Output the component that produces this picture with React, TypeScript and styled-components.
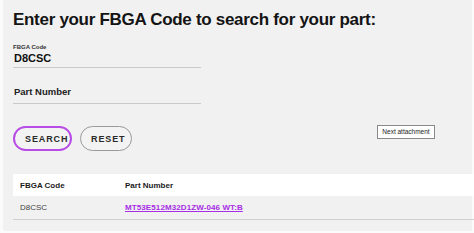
import React from 'react';
import styled, { createGlobalStyle } from 'styled-components';

const GlobalStyle = createGlobalStyle`
  * { box-sizing: border-box; }
  body {
    margin: 0;
    background: #fbfbfb;
    font-family: 'Liberation Sans', Arial, sans-serif;
    color: #1a1a1a;
  }
`;

const Panel = styled.main`
  position: relative;
  margin: 0 2px 0 3px;
  height: 231px;
  background: #f1f1f1;
  padding: 9px 0 0 10px;
  border-bottom-left-radius: 3px;
`;

const Title = styled.h1`
  margin: 0 0 13px;
  font-size: 17px;
  line-height: 21px;
  font-weight: 700;
  letter-spacing: -0.3px;
  color: #141414;
`;

const Field = styled.div`
  width: 188px;
  border-bottom: 1px solid #c9c9c9;
  display: flex;
  flex-direction: column;
  margin-bottom: ${(p: { gap?: number }) => p.gap ?? 0}px;
`;

const SmallLabel = styled.label`
  font-size: 6px;
  font-weight: 700;
  color: #333;
  line-height: 8px;
`;

const Value = styled.div`
  font-size: 11px;
  font-weight: 700;
  line-height: 13px;
  padding: 1px 0 2px 1px;
  color: #111;
`;

const Placeholder = styled.div`
  font-size: 9.5px;
  font-weight: 700;
  line-height: 12px;
  padding: 1px 0 5px 1px;
  color: #222;
`;

const Buttons = styled.div`
  display: flex;
  gap: 8px;
  margin-bottom: 23px;
`;

const PillButton = styled.button<{ primary?: boolean }>`
  height: 25px;
  padding: 0 10px;
  border-radius: 13px;
  border: ${(p) => (p.primary ? '2px solid #b84ce6' : '1.5px solid #9a9a9a')};
  background: #f3f3f3;
  font-family: 'Liberation Sans', Arial, sans-serif;
  font-size: 9px;
  font-weight: 700;
  letter-spacing: 0.9px;
  color: #2a2a2a;
  width: ${(p) => (p.primary ? 59 : 52)}px;
`;

const Tip = styled.div`
  position: absolute;
  left: 374px;
  top: 125px;
  width: 58px;
  height: 14px;
  border: 1px solid #8a8a8a;
  background: #fff;
  font-size: 6.5px;
  line-height: 12px;
  text-align: center;
  color: #222;
`;

const Table = styled.table`
  width: calc(100% + 2px);
  border-collapse: collapse;
  font-size: 8px;
`;

const Th = styled.th`
  background: #fff;
  text-align: left;
  height: 22px;
  font-weight: 700;
  padding: 0 0 0 7px;
  color: #1a1a1a;
  width: ${(p: { w?: number }) => (p.w ? `${p.w}px` : 'auto')};
`;

const Td = styled.td`
  height: 23px;
  padding: 0 0 0 7px;
  border-bottom: 1.5px solid #d0d0d0;
  color: #444;
`;

const PartLink = styled.a`
  color: #a72ee4;
  font-weight: 700;
  text-decoration: underline;
  letter-spacing: 0.1px;
`;

export default function App() {
  return (
    <>
      <GlobalStyle />
      <Panel>
        <Title>Enter your FBGA Code to search for your part:</Title>
        <Field gap={17}>
          <SmallLabel>FBGA Code</SmallLabel>
          <Value>D8CSC</Value>
        </Field>
        <Field gap={22}>
          <Placeholder>Part Number</Placeholder>
        </Field>
        <Buttons>
          <PillButton primary>SEARCH</PillButton>
          <PillButton>RESET</PillButton>
        </Buttons>
        <Tip>Next attachment</Tip>
        <Table>
          <thead>
            <tr>
              <Th w={105}>FBGA Code</Th>
              <Th>Part Number</Th>
            </tr>
          </thead>
          <tbody>
            <tr>
              <Td>D8CSC</Td>
              <Td>
                <PartLink href="#">MT53E512M32D1ZW-046 WT:B</PartLink>
              </Td>
            </tr>
          </tbody>
        </Table>
      </Panel>
    </>
  );
}
